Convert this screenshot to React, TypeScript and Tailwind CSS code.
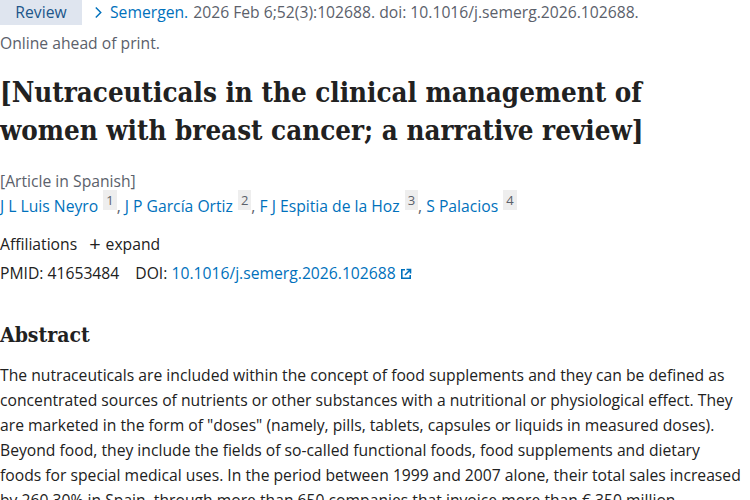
import React from 'react';

const authors = [
  { name: 'J L Luis Neyro', aff: '1' },
  { name: 'J P García Ortiz', aff: '2' },
  { name: 'F J Espitia de la Hoz', aff: '3' },
  { name: 'S Palacios', aff: '4' },
];

function ExternalIcon() {
  return (
    <svg viewBox="0 0 12 12" className="w-3 h-3 inline-block ml-1 align-[-1px]" fill="none" stroke="#0071bc" strokeWidth="1.6">
      <path d="M5 1.8H1.8v8.4h8.4V7" />
      <path d="M6.5 1.5h4v4M10.3 1.7 5 7" />
    </svg>
  );
}

export default function App() {
  return (
    <div className="w-[750px] h-[500px] overflow-hidden bg-white text-[#212121] text-[15.7px] font-['Open_Sans',sans-serif]">
      {/* Citation bar */}
      <div className="flex items-center h-[25px]">
        <span className="h-[25px] w-[82px] bg-[#dfe5ef] text-[#20558a] flex items-center justify-center">Review</span>
        <span className="ml-[12px] text-[#0071bc] flex items-center">
          <svg viewBox="0 0 10 14" className="w-[9px] h-[13px] mr-[7px]" fill="none" stroke="#0071bc" strokeWidth="1.6">
            <path d="M2 1.5 7.5 7 2 12.5" />
          </svg>
          Semergen.
        </span>
        <span className="ml-[5px] text-[#5b616b]">2026 Feb 6;52(3):102688. doi: 10.1016/j.semerg.2026.102688.</span>
      </div>
      <div className="text-[#5b616b] mt-[7px]">Online ahead of print.</div>

      {/* Title */}
      <h1 className="mt-[17px] w-[690px] text-[27.5px] leading-[38px] font-bold font-['DejaVu_Serif_Condensed','DejaVu_Serif',serif] text-[#212121]">
        [Nutraceuticals in the clinical management of women with breast cancer; a narrative review]
      </h1>

      <div className="mt-[20px] text-[#5b616b] leading-[25px]">[Article in Spanish]</div>
      <div className="leading-[25px] text-[#0071bc]">
        {authors.map((a, i) => (
          <span key={a.name}>
            {a.name}
            <sup className="ml-[5px] px-[3px] py-[1px] bg-[#eeeeee] text-[#5b616b] text-[13px]">{a.aff}</sup>
            {i < authors.length - 1 && <span className="text-[#5b616b]">, </span>}
          </span>
        ))}
      </div>

      <div className="mt-[14px] flex items-center text-[#212121]">
        <span>Affiliations</span>
        <span className="ml-[12px] text-[20px] leading-none">+</span>
        <span className="ml-[5px]">expand</span>
      </div>
      <div className="mt-[6px]">
        <span>PMID: 41653484</span>
        <span className="ml-[16px]">DOI: </span>
        <span className="text-[#0071bc]">10.1016/j.semerg.2026.102688</span>
        <ExternalIcon />
      </div>

      {/* Abstract */}
      <h2 className="mt-[33px] text-[21px] font-bold font-['DejaVu_Serif_Condensed','DejaVu_Serif',serif]">Abstract</h2>
      <p className="mt-[13px] w-[744px] leading-[25px] text-[#212121]">
        The nutraceuticals are included within the concept of food supplements and they can be defined as
        concentrated sources of nutrients or other substances with a nutritional or physiological effect. They
        are marketed in the form of "doses" (namely, pills, tablets, capsules or liquids in measured doses).
        Beyond food, they include the fields of so-called functional foods, food supplements and dietary
        foods for special medical uses. In the period between 1999 and 2007 alone, their total sales increased
        by 260.30% in Spain, through more than 650 companies that invoice more than € 350 million.
      </p>
    </div>
  );
}
